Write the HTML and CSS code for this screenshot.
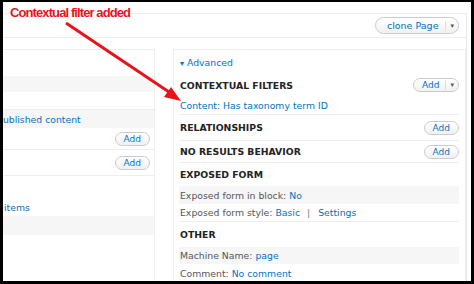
FILE: index.html
```html
<!DOCTYPE html>
<html lang="en">
<head>
<meta charset="UTF-8">
<title>Views - Contextual filter</title>
<link rel="stylesheet" href="styles.css">
</head>
<body>
<div class="shot">
  <div class="page">
    <!-- top bar with the clone button -->
    <div class="bar">
      <span class="btn drop"><span class="lbl">clone Page</span><span class="caret">&#9662;</span></span>
    </div>

    <div class="cols">
      <!-- left column (clipped) -->
      <div class="panel left">
        <div class="row h26"></div>
        <div class="row h16 grey"></div>
        <div class="row h18 line"></div>
        <div class="row h18 grey"><a class="cut">published content</a></div>
        <div class="row h22 line end"><span class="btn">Add</span></div>
        <div class="row h26 line end"><span class="btn">Add</span></div>
        <div class="row h22"></div>
        <div class="row h18"><a class="item">items</a></div>
        <div class="row h19 grey"></div>
      </div>

      <!-- right column -->
      <div class="panel right">
        <div class="adv"><a><span class="tri">&#9662;</span> Advanced</a></div>
        <div class="head h22"><b>CONTEXTUAL FILTERS</b><span class="btn drop"><span class="lbl">Add</span><span class="caret">&#9662;</span></span></div>
        <div class="val h19 line"><a>Content: Has taxonomy term ID</a></div>
        <div class="head h26 line"><b>RELATIONSHIPS</b><span class="btn">Add</span></div>
        <div class="head h22 line"><b>NO RESULTS BEHAVIOR</b><span class="btn">Add</span></div>
        <div class="head h23"><b>EXPOSED FORM</b></div>
        <div class="val h18 grey"><span class="k">Exposed form in block:</span>&nbsp;<a>No</a></div>
        <div class="val h18 line"><span class="k">Exposed form style:</span>&nbsp;<a>Basic</a><span class="sep">|</span><a>Settings</a></div>
        <div class="head h25"><b>OTHER</b></div>
        <div class="val h17 grey"><span class="k">Machine Name:</span>&nbsp;<a>page</a></div>
        <div class="val h18"><span class="k">Comment:</span>&nbsp;<a>No comment</a></div>
      </div>
    </div>
  </div>

  <!-- annotation -->
  <div class="note">Contextual filter added</div>
  <svg class="arrow" width="474" height="284" viewBox="0 0 474 284">
    <line x1="66" y1="23" x2="172" y2="94" stroke="#e8141c" stroke-width="3"/>
    <polygon points="181,101 164,97 171,87" fill="#e8141c"/>
  </svg>
</div>
</body>
</html>
```

FILE: styles.css
```css
*{box-sizing:border-box}
body{margin:0;background:#fff;font-family:"DejaVu Sans",Verdana,sans-serif;font-size:9.3px;color:#333}
a{color:#0074bd;text-decoration:none}
b{color:#222;font-weight:bold}
.shot{position:relative;width:474px;height:284px;border:solid #000;border-width:2px 3px 3px 3px;overflow:hidden;background:#fff}
.page{width:464px;height:100%;border-right:1px solid #e8e8e8}
/* top bar */
.bar{margin-top:11px;height:25px;border-top:1px solid #eee;border-bottom:1px solid #eee;
     display:flex;justify-content:flex-end;align-items:center;padding-right:7px}
/* pill buttons */
.btn{display:inline-flex;align-items:center;height:14px;padding:0 8px;border:1px solid #ccc;border-radius:8px;
     background:linear-gradient(#fff,#f1f1f1);color:#0074bd;font-size:9px}
.btn.drop{padding:0 4px 0 0}
.btn.drop .lbl{padding:0 6px 0 8px;border-right:1px solid #ddd;line-height:10px}
.btn.drop .caret{padding-left:4px;font-size:7px;color:#555}
.bar .btn{height:17px;font-size:9.5px;border-radius:9px}
.bar .btn .lbl{padding:0 7px 0 11px}
/* columns */
.cols{display:flex;gap:18px;margin-top:11px}
.panel{border:1px solid #eee}
.left{width:152px;border-left:none}
.right{width:293px;padding:0 6px 0 5px;border-bottom:none}
.row{display:flex;align-items:center}
.row.end{justify-content:flex-end;padding-right:4px}
.grey{background:#f6f6f6}
.line{border-bottom:1px solid #eee}
.h16{height:16px}.h17{height:17px}.h18{height:18px}.h19{height:19px}.h22{height:22px}
.h23{height:23px}.h25{height:25px}.h26{height:26px}
.cut{margin-left:-6px}
.item{margin-left:1px}
/* right panel rows */
.adv{height:24px;display:flex;align-items:center;padding-left:1px}
.tri{font-size:8px}
.head{display:flex;align-items:center;justify-content:space-between;padding-left:1px}
.val{display:flex;align-items:center;padding-left:1px;white-space:nowrap}
.k{color:#555}
.sep{color:#777;margin:0 8px 0 7px}
/* annotation over the shot */
.note{position:absolute;left:7px;top:4px;font:bold 13px/13px "Liberation Sans",Arial,sans-serif;
      letter-spacing:-.9px;color:#e8141c}
.arrow{position:absolute;left:-3px;top:-2px}
```
